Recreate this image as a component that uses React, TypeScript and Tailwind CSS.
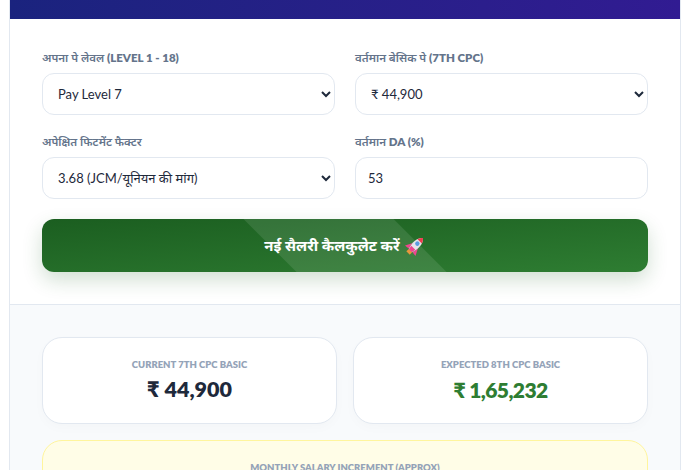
const FONT = "font-['Lato','Noto_Sans','Noto_Sans_Devanagari',sans-serif]";

function Field({ label, en, children }: { label: string; en: string; children: React.ReactNode }) {
  return (
    <div className="flex flex-col">
      <label className="mb-[7px] text-[11.5px] leading-[17px] font-semibold text-[#64748b]">
        {label} <span className="font-extrabold">{en}</span>
      </label>
      {children}
    </div>
  );
}

const selectClass =
  "h-[42px] w-full rounded-xl border border-[#e2e8f0] bg-white px-[11px] text-[13px] text-[#1e293b] outline-none";
const inputClass =
  "h-[42px] w-full rounded-xl border border-[#e2e8f0] bg-white px-3 text-[13px] text-[#1e293b] outline-none";

function Rocket() {
  return (
    <svg viewBox="0 0 24 24" className="h-[21px] w-[21px] shrink-0" aria-hidden>
      <g transform="rotate(45 12 12)">
        <path d="M9.4 19.5 L9.2 24 L14.8 24 L14.6 19.5 Z" fill="#e8973c" />
        <path d="M8 12 L3.5 20.5 L8.5 20 Z" fill="#f0468f" />
        <path d="M16 12 L20.5 20.5 L15.5 20 Z" fill="#f0468f" />
        <path d="M12 0 C16 3.6 17 9 16.2 14 L15 20 L9 20 L7.8 14 C7 9 8 3.6 12 0 Z" fill="#e6e3ea" />
        <path d="M12 0 C13.7 1.5 14.9 3.3 15.5 5.2 L8.5 5.2 C9.1 3.3 10.3 1.5 12 0 Z" fill="#ee3b4d" />
        <path d="M8.8 15.5 L15.2 15.5 L14.6 20.5 L9.4 20.5 Z" fill="#f0468f" />
        <circle cx="12" cy="9" r="2.5" fill="#5b9be0" />
      </g>
    </svg>
  );
}

function StatCard({ title, value, valueClass }: { title: string; value: string; valueClass: string }) {
  return (
    <div className="flex h-[87px] flex-col items-center rounded-[20px] border border-[#e2e8f0] bg-white pt-[19px] shadow-[0_4px_12px_rgba(0,0,0,0.02)]">
      <p className="text-[9.5px] leading-[15px] font-extrabold text-[#94a3b8]">{title}</p>
      <p className={`mt-[1px] leading-[33px] font-extrabold ${valueClass}`}>{value}</p>
    </div>
  );
}

export default function App() {
  return (
    <div className={`h-[470px] w-[687px] overflow-hidden bg-white ${FONT}`}>
      <div className="ml-[9px] h-full w-[672px] border-x border-[#e2e8f0]">
        <div className="h-[19px] bg-gradient-to-r from-[#1a237e] to-[#311b92]" />

        <div className="border-b border-[#e2e8f0] bg-white px-8 pt-[30px] pb-8">
          <div className="grid grid-cols-2 gap-x-5 gap-y-[18px]">
            <Field label="अपना पे लेवल" en="(LEVEL 1 - 18)">
              <select className={selectClass} defaultValue="7">
                <option value="7">Pay Level 7</option>
              </select>
            </Field>
            <Field label="वर्तमान बेसिक पे" en="(7TH CPC)">
              <select className={selectClass} defaultValue="44900">
                <option value="44900">₹ 44,900</option>
              </select>
            </Field>
            <Field label="अपेक्षित फिटमेंट फैक्टर" en="">
              <select className={selectClass} defaultValue="3.68">
                <option value="3.68">3.68 (JCM/यूनियन की मांग)</option>
              </select>
            </Field>
            <Field label="वर्तमान" en="DA (%)">
              <input className={inputClass} defaultValue="53" />
            </Field>
          </div>

          <button
            type="button"
            className="relative mt-5 flex h-[53px] w-full items-center justify-center overflow-hidden rounded-xl bg-gradient-to-br from-[#1b5e20] to-[#2e7d32] text-[15px] font-bold text-white shadow-[0_8px_20px_rgba(27,94,32,0.2)]"
          >
            <span aria-hidden className="absolute inset-y-0 left-[228px] w-[150px] skew-x-[45deg] bg-white/10" />
            <span className="relative flex items-center gap-[5px]">
              नई सैलरी कैलकुलेट करें
              <Rocket />
            </span>
          </button>
        </div>

        <div className="bg-[#f8fafc] px-8 pt-8">
          <div className="grid grid-cols-2 gap-4">
            <StatCard title="CURRENT 7TH CPC BASIC" value="₹ 44,900" valueClass="text-[21.5px] text-[#1e293b]" />
            <StatCard title="EXPECTED 8TH CPC BASIC" value="₹ 1,65,232" valueClass="text-[21px] tracking-[-0.6px] text-[#2e7d32]" />
          </div>
          <div className="mt-4 flex h-[80px] flex-col items-center rounded-[20px] border border-[#fff59d] bg-[#fffde7] pt-[19px]">
            <p className="text-[9.5px] leading-[15px] font-extrabold text-[#94a3b8]">MONTHLY SALARY INCREMENT (APPROX)</p>
          </div>
        </div>
      </div>
    </div>
  );
}
